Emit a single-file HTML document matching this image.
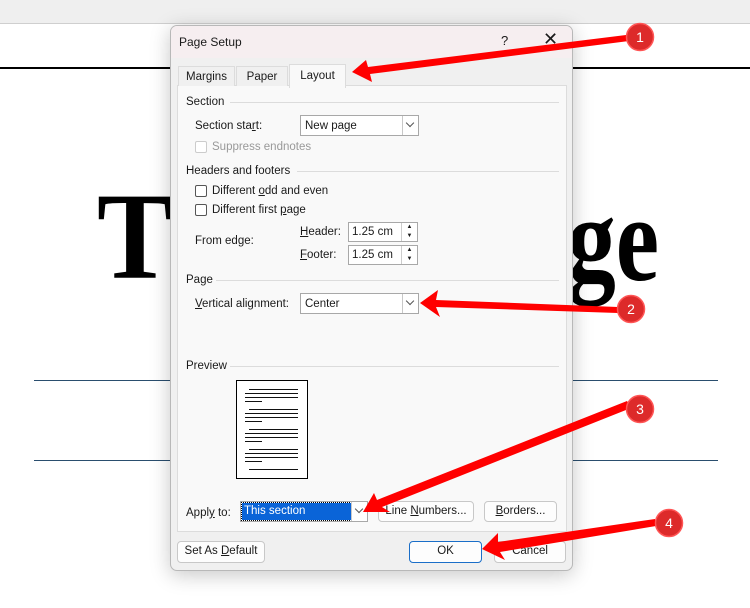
<!DOCTYPE html><html><head><style>
*{margin:0;padding:0;box-sizing:border-box}
body{width:750px;height:608px;position:relative;overflow:hidden;background:#fff;font-family:"Liberation Sans",sans-serif;font-size:11.5px;color:#1a1a1a}
.a{position:absolute;white-space:nowrap}
.box{position:absolute;background:#fff;border:1px solid #a8a8a8}
.dd{position:absolute;right:0;top:0;bottom:0;width:16px;border-left:1px solid #c8c8c8;background:#fff}
.dd:after{content:"";position:absolute;left:4px;top:4px;width:5px;height:5px;border-right:1px solid #555;border-bottom:1px solid #555;transform:rotate(45deg)}
.cb{position:absolute;width:12px;height:12px;border:1px solid #555;border-radius:2px;background:#fff}
.btn{position:absolute;border:1px solid #c8c8c8;border-radius:4px;background:#fdfdfd;text-align:center;line-height:19px}
.hr{position:absolute;height:1px;background:#dcdcdc}
.pl{position:absolute;height:1px;background:#111}
</style></head><body>
<div class="a" style="left:0;top:0;width:750px;height:24px;background:#efefef;border-bottom:1px solid #cfcfcf"></div>
<div class="a" style="left:0;top:67px;width:750px;height:2px;background:#000"></div>
<div class="a" style="left:34px;top:380px;width:684px;height:1px;background:#2a4e6e"></div>
<div class="a" style="left:34px;top:460px;width:684px;height:1px;background:#2a4e6e"></div>
<div class="a" style="left:97px;top:167px;font-family:'Liberation Serif',serif;font-weight:bold;font-size:124px;line-height:140px;color:#000;transform:scaleX(0.92);transform-origin:left">T</div>
<div class="a" style="left:567px;top:170px;font-family:'Liberation Serif',serif;font-weight:bold;font-size:122px;line-height:140px;color:#000;transform:scaleX(0.8);transform-origin:left">ge</div>
<!-- dialog -->
<div class="a" style="left:170px;top:25px;width:403px;height:546px;background:#f0f0f0;border:1px solid #b8b8b8;border-radius:7px;box-shadow:0 4px 20px rgba(0,0,0,.22);overflow:hidden">
<div class="a" style="left:0;top:0;width:403px;height:32px;background:#f6eef0"></div>
<div class="a" style="left:8px;top:9px;font-size:12px">Page Setup</div>
<div class="a" style="left:330px;top:7px;font-size:13px">?</div>
<div class="a" style="left:372px;top:3px;font-size:18px;font-weight:300">✕</div>
<div class="a" style="left:6px;top:59px;width:390px;height:447px;border:1px solid #dcdcdc;background:#f9f9f9"></div>
<div class="a" style="left:7px;top:40px;width:57px;height:20px;border:1px solid #dcdcdc;border-bottom:none;background:#f0f0f0;text-align:center;line-height:20px">Margins</div>
<div class="a" style="left:65px;top:40px;width:52px;height:20px;border:1px solid #dcdcdc;border-bottom:none;background:#f0f0f0;text-align:center;line-height:20px">Paper</div>
<div class="a" style="left:118px;top:38px;width:57px;height:24px;border:1px solid #dcdcdc;border-bottom:none;background:#f9f9f9;text-align:center;line-height:22px">Layout</div>
<div class="a" style="left:15px;top:70px">Section</div><div class="hr" style="left:59px;top:76px;width:329px"></div>
<div class="a" style="left:24px;top:94px">Section sta<u>r</u>t:</div>
<div class="box" style="left:129px;top:89px;width:119px;height:21px"><span style="position:absolute;left:4px;top:4px">New page</span><div class="dd"></div></div>
<div class="cb" style="left:24px;top:115px;border-color:#ccc"></div><div class="a" style="left:41px;top:115px;color:#999">Suppress endnotes</div>
<div class="a" style="left:15px;top:139px">Headers and footers</div><div class="hr" style="left:126px;top:145px;width:262px"></div>
<div class="cb" style="left:24px;top:159px"></div><div class="a" style="left:41px;top:159px">Different <u>o</u>dd and even</div>
<div class="cb" style="left:24px;top:178px"></div><div class="a" style="left:41px;top:178px">Different first <u>p</u>age</div>
<div class="a" style="left:24px;top:209px">From edge:</div>
<div class="a" style="left:129px;top:200px"><u>H</u>eader:</div>
<div class="a" style="left:129px;top:223px"><u>F</u>ooter:</div>
<div class="box" style="left:177px;top:196px;width:70px;height:20px"><span style="position:absolute;left:3px;top:3px">1.25 cm</span><div class="a" style="right:0;top:0;width:16px;height:18px;border-left:1px solid #ccc;font-size:6px;line-height:9px;text-align:center">▲<br>▼</div></div>
<div class="box" style="left:177px;top:219px;width:70px;height:20px"><span style="position:absolute;left:3px;top:3px">1.25 cm</span><div class="a" style="right:0;top:0;width:16px;height:18px;border-left:1px solid #ccc;font-size:6px;line-height:9px;text-align:center">▲<br>▼</div></div>
<div class="a" style="left:15px;top:248px">Page</div><div class="hr" style="left:45px;top:254px;width:343px"></div>
<div class="a" style="left:24px;top:272px"><u>V</u>ertical alignment:</div>
<div class="box" style="left:129px;top:267px;width:119px;height:21px"><span style="position:absolute;left:4px;top:4px">Center</span><div class="dd"></div></div>
<div class="a" style="left:15px;top:334px">Preview</div><div class="hr" style="left:59px;top:340px;width:329px"></div>
<div class="a" style="left:65px;top:354px;width:72px;height:99px;background:#fff;border:1px solid #000">
<div class="pl" style="left:12px;top:8px;width:49px"></div><div class="pl" style="left:8px;top:12px;width:53px"></div><div class="pl" style="left:8px;top:16px;width:53px"></div><div class="pl" style="left:8px;top:20px;width:17px"></div>
<div class="pl" style="left:12px;top:28px;width:49px"></div><div class="pl" style="left:8px;top:32px;width:53px"></div><div class="pl" style="left:8px;top:36px;width:53px"></div><div class="pl" style="left:8px;top:40px;width:17px"></div>
<div class="pl" style="left:12px;top:48px;width:49px"></div><div class="pl" style="left:8px;top:52px;width:53px"></div><div class="pl" style="left:8px;top:56px;width:53px"></div><div class="pl" style="left:8px;top:60px;width:17px"></div>
<div class="pl" style="left:12px;top:68px;width:49px"></div><div class="pl" style="left:8px;top:72px;width:53px"></div><div class="pl" style="left:8px;top:76px;width:53px"></div><div class="pl" style="left:8px;top:80px;width:17px"></div>
<div class="pl" style="left:12px;top:88px;width:49px"></div>
</div>
<div class="a" style="left:15px;top:481px">Appl<u>y</u> to:</div>
<div class="box" style="left:69px;top:475px;width:128px;height:21px"><span style="position:absolute;left:1px;top:1px;width:109px;height:17px;background:#0a64d8;color:#fff;padding-left:2px;line-height:17px;outline:1px dotted #000">This section</span><div class="dd"></div></div>
<div class="btn" style="left:207px;top:475px;width:96px;height:21px">Line <u>N</u>umbers...</div>
<div class="btn" style="left:313px;top:475px;width:73px;height:21px"><u>B</u>orders...</div>
<div class="btn" style="left:6px;top:515px;width:88px;height:22px">Set As <u>D</u>efault</div>
<div class="btn" style="left:238px;top:515px;width:73px;height:22px;border-color:#1a6ec8">OK</div>
<div class="btn" style="left:323px;top:515px;width:72px;height:22px">Cancel</div>
</div>
<svg class="a" style="left:0;top:0" width="750" height="608">
<g fill="#f00">
<polygon points="626,35 629,41 370,74 372,82 352,72 366,60 368,67"/>
<polygon points="618,307 618,313 436,307 440,317 420,303 438,290 436,300"/>
<polygon points="627,401 631,408 382,507 390,512 363,512 374,493 377,500"/>
<polygon points="655,519 656,526 500,552 505,560 482,549 498,533 498,542"/>
</g>
<g font-family="Liberation Sans" font-size="14" fill="#fff" text-anchor="middle">
<circle cx="640" cy="37" r="13.5" fill="#dd2a2a" stroke="#f55" stroke-width="1.5"/><text x="640" y="42">1</text>
<circle cx="631" cy="309" r="13.5" fill="#dd2a2a" stroke="#f55" stroke-width="1.5"/><text x="631" y="314">2</text>
<circle cx="640" cy="409" r="13.5" fill="#dd2a2a" stroke="#f55" stroke-width="1.5"/><text x="640" y="414">3</text>
<circle cx="669" cy="523" r="13.5" fill="#dd2a2a" stroke="#f55" stroke-width="1.5"/><text x="669" y="528">4</text>
</g></svg>
</body></html>
